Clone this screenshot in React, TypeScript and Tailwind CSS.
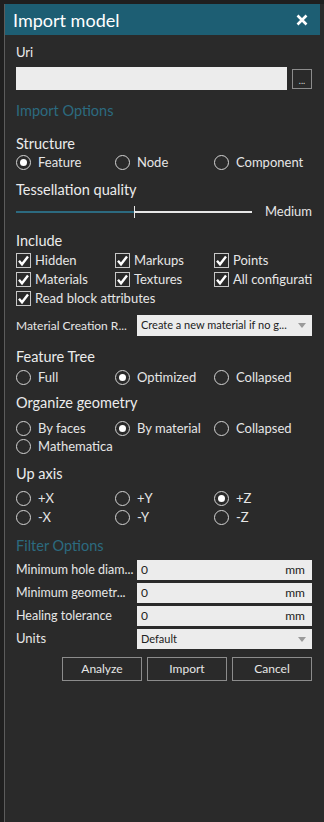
import React from 'react'

const FONT = { fontFamily: 'Lato, "Noto Sans", sans-serif' }

const COLS = 'grid grid-cols-[99px_99px_1fr]'

function Radio({ label, checked }: { label: string; checked?: boolean }) {
  return (
    <div className="flex items-center gap-[7px] h-[17px] whitespace-nowrap overflow-hidden">
      <span className="w-[15px] h-[15px] shrink-0 rounded-full border-[1.5px] border-[#d4d4d4] flex items-center justify-center">
        {checked && <span className="w-[7px] h-[7px] rounded-full bg-white" />}
      </span>
      <span className="text-[13px] leading-[17px] text-[#e6e6e6]">{label}</span>
    </div>
  )
}

function Check({ label }: { label: string }) {
  return (
    <div className="flex items-center gap-[4px] h-[15px] whitespace-nowrap overflow-hidden">
      <span className="w-[15px] h-[15px] shrink-0 border border-[#c8c8c8] flex items-center justify-center">
        <svg width="13" height="13" viewBox="0 0 13 13">
          <path d="M2 6.8 L5 10.3 L11 2.5" fill="none" stroke="#fff" strokeWidth="2.4" />
        </svg>
      </span>
      <span className="text-[13px] leading-[15px] text-[#e6e6e6]">{label}</span>
    </div>
  )
}

function Heading({ children }: { children: React.ReactNode }) {
  return <div className="text-[14.5px] text-[#ececec] leading-[18px]">{children}</div>
}

function Section({ children }: { children: React.ReactNode }) {
  return <div className="text-[14.5px] text-[#2c6a80] leading-[18px]">{children}</div>
}

function Arrow() {
  return (
    <svg width="8" height="5" viewBox="0 0 8 5" className="shrink-0">
      <path d="M0 0 H8 L4 5 Z" fill="#9a9a9a" />
    </svg>
  )
}

function UnitField({ label }: { label: string }) {
  return (
    <div className="flex items-center h-[20px]">
      <div className="w-[121px] pr-[2px] text-[12.5px] text-[#e6e6e6] whitespace-nowrap overflow-hidden">{label}</div>
      <div className="flex-1 h-[20px] bg-[#ececec] flex items-center justify-between pl-[4px] pr-[7px] text-[12px] text-[#222]">
        <span>0</span>
        <span>mm</span>
      </div>
    </div>
  )
}

export default function App() {
  return (
    <div className="w-[324px] h-[822px] bg-[#1f1f1f] pt-[4px] pl-[4px]" style={FONT}>
      <div className="h-full border-l border-[#5c5c5c] bg-[#2a2a2a] flex flex-col">
        <div className="h-[31px] mr-[4px] bg-[#1d5e73] flex items-center justify-between pl-[8px] pr-[12px]">
          <span className="text-[18px] text-white leading-none">Import model</span>
          <svg width="12" height="12" viewBox="0 0 12 12">
            <path d="M1.5 1.5 L10.5 10.5 M10.5 1.5 L1.5 10.5" stroke="#fff" strokeWidth="2.6" />
          </svg>
        </div>

        <div className="pl-[11px] pr-[12px] flex flex-col">
          <div className="mt-[9px] text-[13px] text-[#ececec] leading-[16px]">Uri</div>
          <div className="mt-[7px] flex items-center gap-[5px]">
            <div className="flex-1 h-[23px] bg-[#ececec]" />
            <div className="w-[20px] h-[20px] border border-[#8c8c8c] flex items-end justify-center pb-[3px]">
              <span className="text-[9px] leading-none text-[#ddd]">...</span>
            </div>
          </div>

          <div className="mt-[12px]"><Section>Import Options</Section></div>

          <div className="mt-[15px]"><Heading>Structure</Heading></div>
          <div className={`mt-[1px] ${COLS} items-center`}>
            <Radio label="Feature" checked />
            <Radio label="Node" />
            <Radio label="Component" />
          </div>

          <div className="mt-[10px]"><Heading>Tessellation quality</Heading></div>
          <div className="mt-[5px] flex items-center h-[16px]">
            <div className="w-[236px] flex items-center">
              <div className="w-[118px] h-[2px] bg-[#2c6a80]" />
              <div className="w-[1px] h-[12px] bg-[#e6e6e6]" />
              <div className="flex-1 h-[2px] bg-[#e6e6e6]" />
            </div>
            <div className="flex-1 text-right text-[13px] text-[#e6e6e6]">Medium</div>
          </div>

          <div className="mt-[12px]"><Heading>Include</Heading></div>
          <div className={`mt-[3px] ${COLS} gap-y-[4px]`}>
            <Check label="Hidden" />
            <Check label="Markups" />
            <Check label="Points" />
            <Check label="Materials" />
            <Check label="Textures" />
            <Check label="All configurations" />
            <div className="col-span-3"><Check label="Read block attributes" /></div>
          </div>

          <div className="mt-[9px] flex items-center h-[21px]">
            <div className="w-[121px] text-[12px] text-[#e6e6e6] whitespace-nowrap">Material Creation R...</div>
            <div className="flex-1 h-[21px] bg-[#ececec] flex items-center justify-between pl-[4px] pr-[6px]">
              <span className="text-[11px] text-[#222] whitespace-nowrap overflow-hidden">Create a new material if no g...</span>
              <Arrow />
            </div>
          </div>

          <div className="mt-[12px]"><Heading>Feature Tree</Heading></div>
          <div className={`mt-[3px] ${COLS} items-center`}>
            <Radio label="Full" />
            <Radio label="Optimized" checked />
            <Radio label="Collapsed" />
          </div>

          <div className="mt-[8px]"><Heading>Organize geometry</Heading></div>
          <div className={`mt-[8px] ${COLS} gap-y-[1px] items-center`}>
            <Radio label="By faces" />
            <Radio label="By material" checked />
            <Radio label="Collapsed" />
            <div className="pr-[2px] overflow-hidden"><Radio label="Mathematical curves" /></div>
          </div>

          <div className="mt-[10px]"><Heading>Up axis</Heading></div>
          <div className={`mt-[7px] ${COLS} gap-y-[2px] items-center`}>
            <Radio label="+X" />
            <Radio label="+Y" />
            <Radio label="+Z" checked />
            <Radio label="-X" />
            <Radio label="-Y" />
            <Radio label="-Z" />
          </div>

          <div className="mt-[11px]"><Section>Filter Options</Section></div>

          <div className="mt-[5px] flex flex-col gap-[3px]">
            <UnitField label="Minimum hole diam..." />
            <UnitField label="Minimum geometr..." />
            <UnitField label="Healing tolerance" />
            <div className="flex items-center h-[20px]">
              <div className="w-[121px] text-[13px] text-[#e6e6e6]">Units</div>
              <div className="flex-1 h-[20px] bg-[#ececec] flex items-center justify-between pl-[4px] pr-[6px]">
                <span className="text-[11px] text-[#222]">Default</span>
                <Arrow />
              </div>
            </div>
          </div>

          <div className="mt-[8px] flex justify-end gap-[5px]">
            {['Analyze', 'Import', 'Cancel'].map((b) => (
              <div
                key={b}
                className="w-[80px] h-[24px] border border-[#8c8c8c] flex items-center justify-center text-[12px] text-[#e6e6e6]"
              >
                {b}
              </div>
            ))}
          </div>
        </div>
      </div>
    </div>
  )
}
